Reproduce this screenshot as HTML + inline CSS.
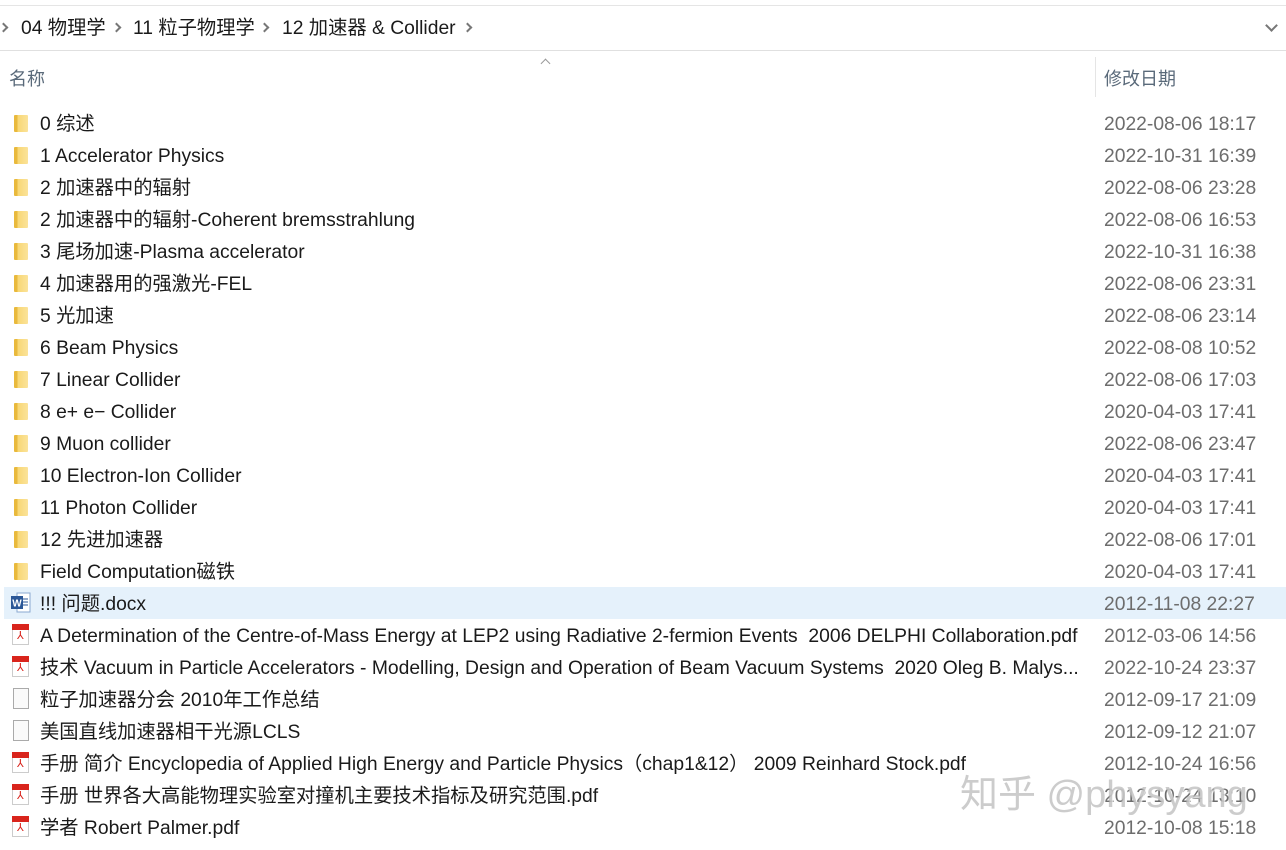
<!DOCTYPE html>
<html><head><meta charset="utf-8"><style>
*{margin:0;padding:0;box-sizing:border-box}
body{width:1286px;height:850px;background:#fff;overflow:hidden;position:relative;font-family:"Liberation Sans","Noto Sans CJK SC",sans-serif;color:#1a1a1a}
.top{position:absolute;left:0;top:5px;width:1286px;height:46px;border-top:1px solid #e5e5e5;border-bottom:1px solid #e0e0e0}
.bc{position:absolute;top:13px;height:32px;line-height:32px;font-size:19.3px;color:#1a1a1a;white-space:nowrap}
.chev{position:absolute;top:24px;width:7px;height:7px;border-right:2px solid #777;border-top:2px solid #777;transform:rotate(45deg)}
.hdr{position:absolute;top:63px;height:32px;line-height:32px;font-size:18px;color:#5a6a7a}
.row{position:absolute;left:4px;width:1282px;height:32px}
.row .n{position:absolute;left:36px;top:2px;height:32px;line-height:32px;font-size:19.3px;white-space:nowrap}
.row .d{position:absolute;left:1100px;top:2px;height:32px;line-height:32px;font-size:19.3px;color:#6d6d6d;white-space:nowrap}
.fold{position:absolute;left:10px;top:8px;width:14px;height:17px;background:linear-gradient(90deg,#e9b93c 0,#e9b93c 3px,#f8d775 4px,#fbe39a 100%);border-radius:1px}
.pdf{position:absolute;left:8px;top:5px;width:17px;height:21px;background:#fff;border:1px solid #ccc}
.pdf:before{content:"";position:absolute;left:-1px;top:-1px;width:17px;height:6px;background:#d9241c}
.pdf:after{content:"⅄";position:absolute;left:4px;top:5px;font-size:11px;line-height:12px;color:#d9241c}
.fil{position:absolute;left:9px;top:5px;width:16px;height:21px;border:1px solid #aaa;background:#fafafa}
.doc{position:absolute;left:7px;top:5px;width:20px;height:21px}
</style></head><body>
<div class="top"></div>
<div class="chev" style="left:0"></div>
<div class="bc" style="left:21px">04 物理学</div>
<div class="chev" style="left:113px"></div>
<div class="bc" style="left:133px">11 粒子物理学</div>
<div class="chev" style="left:261px"></div>
<div class="bc" style="left:282px">12 加速器 &amp; Collider</div>
<div class="chev" style="left:464px"></div>
<div style="position:absolute;left:1267px;top:21px;width:9px;height:9px;border-right:2px solid #777;border-bottom:2px solid #777;transform:rotate(45deg)"></div>
<div style="position:absolute;left:542px;top:60px;width:7px;height:7px;border-left:1px solid #999;border-top:1px solid #999;transform:rotate(45deg)"></div>
<div class="hdr" style="left:9px">名称</div>
<div style="position:absolute;left:1095px;top:57px;width:1px;height:40px;background:#e5e5e5"></div>
<div class="hdr" style="left:1104px">修改日期</div>

<div class="row" style="top:107px"><div class="fold"></div><div class="n">0 综述</div><div class="d">2022-08-06 18:17</div></div>
<div class="row" style="top:139px"><div class="fold"></div><div class="n">1 Accelerator Physics</div><div class="d">2022-10-31 16:39</div></div>
<div class="row" style="top:171px"><div class="fold"></div><div class="n">2 加速器中的辐射</div><div class="d">2022-08-06 23:28</div></div>
<div class="row" style="top:203px"><div class="fold"></div><div class="n">2 加速器中的辐射-Coherent bremsstrahlung</div><div class="d">2022-08-06 16:53</div></div>
<div class="row" style="top:235px"><div class="fold"></div><div class="n">3 尾场加速-Plasma accelerator</div><div class="d">2022-10-31 16:38</div></div>
<div class="row" style="top:267px"><div class="fold"></div><div class="n">4 加速器用的强激光-FEL</div><div class="d">2022-08-06 23:31</div></div>
<div class="row" style="top:299px"><div class="fold"></div><div class="n">5 光加速</div><div class="d">2022-08-06 23:14</div></div>
<div class="row" style="top:331px"><div class="fold"></div><div class="n">6 Beam Physics</div><div class="d">2022-08-08 10:52</div></div>
<div class="row" style="top:363px"><div class="fold"></div><div class="n">7 Linear Collider</div><div class="d">2022-08-06 17:03</div></div>
<div class="row" style="top:395px"><div class="fold"></div><div class="n">8 e+ e− Collider</div><div class="d">2020-04-03 17:41</div></div>
<div class="row" style="top:427px"><div class="fold"></div><div class="n">9 Muon collider</div><div class="d">2022-08-06 23:47</div></div>
<div class="row" style="top:459px"><div class="fold"></div><div class="n">10 Electron-Ion Collider</div><div class="d">2020-04-03 17:41</div></div>
<div class="row" style="top:491px"><div class="fold"></div><div class="n">11 Photon Collider</div><div class="d">2020-04-03 17:41</div></div>
<div class="row" style="top:523px"><div class="fold"></div><div class="n">12 先进加速器</div><div class="d">2022-08-06 17:01</div></div>
<div class="row" style="top:555px"><div class="fold"></div><div class="n">Field Computation磁铁</div><div class="d">2020-04-03 17:41</div></div>
<div class="row" style="top:587px;background:#e5f1fb"><svg class="doc" viewBox="0 0 20 21"><rect x="6" y="1" width="13" height="19" fill="#fff" stroke="#8aa9d0"/><line x1="12" y1="7" x2="17" y2="7" stroke="#2b5797"/><line x1="12" y1="10" x2="17" y2="10" stroke="#2b5797"/><line x1="12" y1="13" x2="17" y2="13" stroke="#2b5797"/><rect x="0" y="4" width="12" height="13" fill="#2b5797"/><text x="6" y="14.5" font-size="10" fill="#fff" text-anchor="middle" font-family="Liberation Sans" font-weight="bold">W</text></svg><div class="n">!!! 问题.docx</div><div class="d">2012-11-08 22:27</div></div>
<div class="row" style="top:619px"><div class="pdf"></div><div class="n">A Determination of the Centre-of-Mass Energy at LEP2 using Radiative 2-fermion Events &nbsp;2006 DELPHI Collaboration.pdf</div><div class="d">2012-03-06 14:56</div></div>
<div class="row" style="top:651px"><div class="pdf"></div><div class="n">技术 Vacuum in Particle Accelerators - Modelling, Design and Operation of Beam Vacuum Systems &nbsp;2020 Oleg B. Malys...</div><div class="d">2022-10-24 23:37</div></div>
<div class="row" style="top:683px"><div class="fil"></div><div class="n">粒子加速器分会 2010年工作总结</div><div class="d">2012-09-17 21:09</div></div>
<div class="row" style="top:715px"><div class="fil"></div><div class="n">美国直线加速器相干光源LCLS</div><div class="d">2012-09-12 21:07</div></div>
<div class="row" style="top:747px"><div class="pdf"></div><div class="n">手册 简介 Encyclopedia of Applied High Energy and Particle Physics（chap1&amp;12） 2009 Reinhard Stock.pdf</div><div class="d">2012-10-24 16:56</div></div>
<div class="row" style="top:779px"><div class="pdf"></div><div class="n">手册 世界各大高能物理实验室对撞机主要技术指标及研究范围.pdf</div><div class="d">2012-10-24 13:10</div></div>
<div class="row" style="top:811px"><div class="pdf"></div><div class="n">学者 Robert Palmer.pdf</div><div class="d">2012-10-08 15:18</div></div>
<div style="position:absolute;left:960px;top:770px;font-size:38px;line-height:50px;color:rgba(170,170,170,0.6);white-space:nowrap;text-shadow:1px 1px 1px rgba(255,255,255,0.8)">知乎 @physyang</div>
</body></html>
